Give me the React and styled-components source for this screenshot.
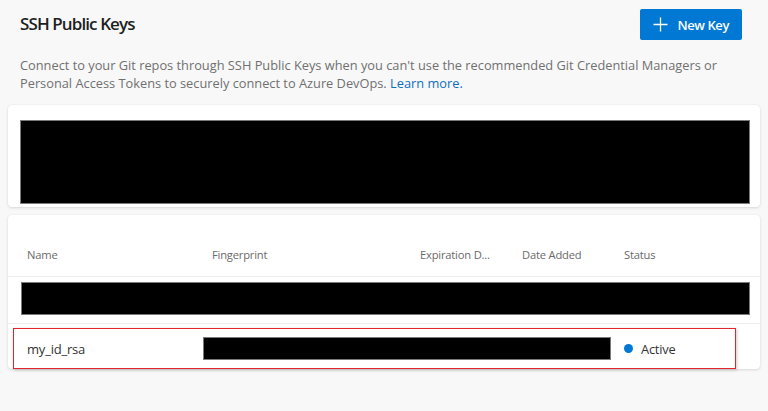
import styled, { createGlobalStyle } from "styled-components";

const GlobalStyle = createGlobalStyle`
    html, body {
        margin: 0;
        padding: 0;
        background-color: #f8f8f8;
        font-family: "Open Sans", "Noto Sans", sans-serif;
    }
`;

const Page = styled.div`
    width: 768px;
    height: 411px;
    box-sizing: border-box;
    padding: 9px 8px 0 8px;
    overflow: hidden;
`;

const Header = styled.div`
    display: flex;
    align-items: flex-start;
    justify-content: space-between;
    padding: 0 18px 0 12px;
`;

const Title = styled.h1`
    margin: 3px 0 0 0;
    font-size: 17px;
    font-weight: 600;
    color: #201f1e;
    letter-spacing: -0.9px;
`;

const PrimaryButton = styled.button`
    display: flex;
    align-items: center;
    gap: 9px;
    height: 31px;
    padding: 0 13px 0 13px;
    border: none;
    border-radius: 2px;
    background-color: #0078d4;
    color: #ffffff;
    font-family: inherit;
    font-size: 13px;
    font-weight: 600;
    letter-spacing: -0.4px;
    cursor: pointer;
`;

const Description = styled.p`
    margin: 16px 0 13px 12px;
    font-size: 12.8px;
    line-height: 18px;
    color: #707070;
`;

const Link = styled.a`
    color: #106ebe;
    text-decoration: none;
`;

const Card = styled.div`
    background-color: #ffffff;
    border-radius: 4px;
    box-shadow: 0 1px 3px rgba(0, 0, 0, 0.13), 0 0 1px rgba(0, 0, 0, 0.08);
    padding: ${(props) => props.pad};
    margin-bottom: 8px;
`;

const Redacted = styled.div`
    background-color: #000000;
    height: ${(props) => props.h}px;
    flex: ${(props) => props.flex || "none"};
    border: 1px solid #7a7a7a;
    box-sizing: border-box;
`;

const TableHead = styled.div`
    display: grid;
    grid-template-columns: 185px 208px 102px 102px 1fr;
    padding: 31px 0 12px 19px;
    border-bottom: 1px solid #eeeeee;
`;

const HeadCell = styled.div`
    font-size: 11.2px;
    line-height: 18px;
    color: #6a6a6a;
    letter-spacing: -0.2px;
    white-space: nowrap;
`;

const RedactedRow = styled.div`
    padding: 5px 10px 8px 13px;
    border-bottom: 1px solid #eeeeee;
`;

const KeyRow = styled.div`
    display: flex;
    align-items: center;
    height: 41px;
    box-sizing: border-box;
    margin: 4px 24px 19px 5px;
    padding-left: 13px;
    border: 1.5px solid #e3262b;
    box-shadow: 1px 1px 3px rgba(0, 0, 0, 0.2);
`;

const KeyName = styled.div`
    width: 176px;
    font-size: 13px;
    color: #333333;
    letter-spacing: -0.2px;
`;

const Status = styled.div`
    display: flex;
    align-items: center;
    gap: 8px;
    margin-left: 13px;
    font-size: 12.8px;
    color: #333333;
    letter-spacing: -0.2px;
`;

const Dot = styled.span`
    width: 9px;
    height: 9px;
    border-radius: 50%;
    background-color: #0078d4;
`;

const PlusIcon = () => (
    <svg width="15" height="15" viewBox="0 0 15 15">
        <path d="M7.5 0.5V14.5M0.5 7.5H14.5" stroke="#ffffff" strokeWidth="1.3" fill="none" />
    </svg>
);

const App = () => {
    return (
        <Page>
            <GlobalStyle />
            <Header>
                <Title>SSH Public Keys</Title>
                <PrimaryButton>
                    <PlusIcon />
                    New Key
                </PrimaryButton>
            </Header>

            <Description>
                Connect to your Git repos through SSH Public Keys when you can't use the recommended Git Credential Managers or
                <br />
                Personal Access Tokens to securely connect to Azure DevOps. <Link href="#">Learn more.</Link>
            </Description>

            <Card pad="15px 10px 3px 12px">
                <Redacted h={84} />
            </Card>

            <Card pad="0">
                <TableHead>
                    <HeadCell>Name</HeadCell>
                    <HeadCell>Fingerprint</HeadCell>
                    <HeadCell>Expiration D...</HeadCell>
                    <HeadCell>Date Added</HeadCell>
                    <HeadCell>Status</HeadCell>
                </TableHead>
                <RedactedRow>
                    <Redacted h={33} />
                </RedactedRow>
                <KeyRow>
                    <KeyName>my_id_rsa</KeyName>
                    <Redacted h={23} flex="0 0 408px" />
                    <Status>
                        <Dot />
                        Active
                    </Status>
                </KeyRow>
            </Card>
        </Page>
    );
};

export default App;
